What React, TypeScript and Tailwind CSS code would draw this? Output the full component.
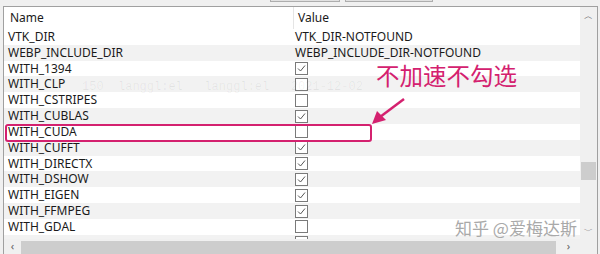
import React from "react";

type Row = [string, string | boolean];

const rows: Row[] = [
  ["VTK_DIR", "VTK_DIR-NOTFOUND"],
  ["WEBP_INCLUDE_DIR", "WEBP_INCLUDE_DIR-NOTFOUND"],
  ["WITH_1394", true],
  ["WITH_CLP", false],
  ["WITH_CSTRIPES", false],
  ["WITH_CUBLAS", true],
  ["WITH_CUDA", false],
  ["WITH_CUFFT", true],
  ["WITH_DIRECTX", true],
  ["WITH_DSHOW", true],
  ["WITH_EIGEN", true],
  ["WITH_FFMPEG", true],
  ["WITH_GDAL", false],
  ["", false],
];

const Check = ({ on }: { on: boolean }) => (
  <svg width="13" height="13" viewBox="0 0 13 13" className="block">
    <rect x="0.5" y="0.5" width="12" height="12" fill="#fff" stroke="#7a7a7a" />
    {on && <polyline points="3,6.5 5.5,9 10,3.5" fill="none" stroke="#555" strokeWidth="1" />}
  </svg>
);

const App = () => {
  return (
    <div
      className="relative w-[600px] h-[254px] overflow-hidden bg-[#f0f0f0] text-[12px] text-[#1a1a1a]"
      style={{ fontFamily: '"Noto Sans", "Open Sans", sans-serif' }}
    >
      {/* top strip with bottoms of two buttons */}
      <div className="h-[6px] flex">
        <div className="ml-[270px] w-[70px] h-[2px] bg-[#e1e1e1] border border-t-0 border-[#adadad]" />
        <div className="ml-[5px] w-[88px] h-[2px] bg-[#e1e1e1] border border-t-0 border-[#adadad]" />
      </div>

      {/* list box */}
      <div className="ml-[3px] mr-[2px] h-[248px] border-l border-t border-r border-[#a0a0a0] bg-white flex flex-col">
        <div className="flex flex-1 min-h-0">
          <div className="flex-1 min-w-0 overflow-hidden">
            <div className="h-[22px] flex items-center">
              <div className="w-[289px] pl-[6px] h-full flex items-center">Name</div>
              <div className="w-px h-full bg-[#e5e5e5]" />
              <div className="pl-[4px]">Value</div>
            </div>
            {rows.map(([name, value], i) => (
              <div
                key={i}
                className={`h-[15.83px] flex items-center leading-none ${i % 2 === 1 ? "bg-[#f2f2f2]" : "bg-white"}`}
              >
                <div className="w-[290px] pl-[4px] whitespace-nowrap">{name}</div>
                <div className="pl-[1px] whitespace-nowrap">
                  {typeof value === "boolean" ? <Check on={value} /> : value}
                </div>
              </div>
            ))}
          </div>
          {/* vertical scrollbar */}
          <div className="w-[17px] bg-[#f0f0f0] flex flex-col items-center">
            <div className="h-[17px] flex items-center justify-center text-[9px] text-[#606060]">︿</div>
            <div className="mt-[138px] w-[15px] h-[18px] bg-[#cdcdcd]" />
            <div className="mt-auto h-[17px] flex items-center justify-center text-[9px] text-[#606060]">﹀</div>
          </div>
        </div>
        {/* horizontal scrollbar */}
        <div className="h-[15px] flex bg-[#f0f0f0]">
          <div className="w-[17px] flex items-center justify-center text-[11px] text-[#606060]">&lsaquo;</div>
          <div className="w-[535px] mt-[2px] bg-[#cdcdcd]" />
          <div className="w-[25px] flex items-center justify-center text-[11px] text-[#606060]">&rsaquo;</div>
          <div className="flex-1" />
        </div>
      </div>

      {/* faint scan watermark */}
      <div
        className="absolute left-[82px] top-[78px] whitespace-pre text-[12px] text-black/[0.06]"
        style={{ fontFamily: '"Liberation Mono", monospace' }}
      >
        {"150  langgl:el   langgl:el   2021-12-02"}
      </div>

      {/* annotation */}
      <div className="absolute left-[5px] top-[124px] w-[367px] h-[18px] border-2 border-[#d4216f] rounded-[3px]" />
      <svg className="absolute left-0 top-0" width="600" height="254">
        <line x1="404" y1="99" x2="380" y2="117" stroke="#d4216f" strokeWidth="2.5" />
        <polygon points="372,124 377,111 386,120" fill="#d4216f" />
      </svg>
      <div
        className="absolute left-[376px] top-[64px] text-[23.5px] leading-none text-[#d4216f] whitespace-nowrap"
        style={{ fontFamily: '"Noto Sans CJK SC", sans-serif' }}
      >
        不加速不勾选
      </div>

      {/* site watermark */}
      <div
        className="absolute left-[455px] top-[219px] text-[17px] leading-none text-[#a9a9a9] whitespace-nowrap"
        style={{ fontFamily: '"Noto Sans CJK SC", sans-serif' }}
      >
        知乎 @爱梅达斯
      </div>
    </div>
  );
};

export default App;
